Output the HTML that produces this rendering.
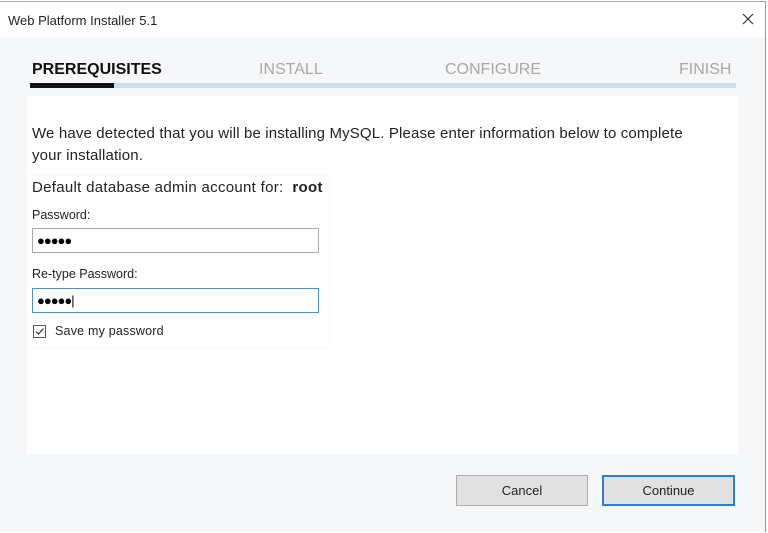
<!DOCTYPE html>
<html><head><style>
body{margin:0;width:768px;height:533px;background:#fff;font-family:"Liberation Sans",sans-serif;position:relative;overflow:hidden}
.win{position:absolute;left:0;top:1px;width:765px;height:530px;background:#f6f7f8;border-top:1px solid #aaa;border-right:1px solid #999}
.title{position:absolute;left:0;top:0;width:765px;height:35px;background:#fff}
.t{position:absolute;font-size:13px;color:#222}
.step{position:absolute;top:59px;font-size:16px;color:#a8a8a8}
.panel{position:absolute;left:27px;top:94px;width:711px;height:358px;background:#fff}
.inp{position:absolute;left:32px;width:287px;height:25px;border:1px solid #a9a9a9;background:#fff;font-size:13px;line-height:24px;padding-left:4px;box-sizing:border-box;letter-spacing:-1px}
.btn{position:absolute;top:473px;height:31px;background:#e1e1e1;border:1px solid #adadad;box-sizing:border-box;font-size:13px;text-align:center;line-height:29px;color:#222}
</style></head><body>
<div class="win">
<div class="title"></div>
<div class="t" style="left:8px;top:11px">Web Platform Installer 5.1</div>
<svg style="position:absolute;left:742px;top:11px" width="12" height="12"><path d="M1 1L11 11M11 1L1 11" stroke="#333" stroke-width="1.2"/></svg>
<div class="step" style="left:32px;color:#111;font-weight:bold">PREREQUISITES</div>
<div class="step" style="left:259px">INSTALL</div>
<div class="step" style="left:445px">CONFIGURE</div>
<div class="step" style="left:679px">FINISH</div>
<div style="position:absolute;left:30px;top:81px;width:706px;height:5px;background:#cfdeeb"></div>
<div style="position:absolute;left:30px;top:81px;width:84px;height:5px;background:#111"></div>
<div class="panel"></div>
<div class="t" style="left:32px;top:121px;font-size:15px;letter-spacing:0.15px;line-height:22px;width:665px">We have detected that you will be installing MySQL. Please enter information below to complete your installation.</div>
<div style="position:absolute;left:27px;top:174px;width:302px;height:172px;background:#fff;box-shadow:0 0 2px #f0f0f0"></div>
<div class="t" style="left:32px;top:177px;font-size:15px;letter-spacing:0.3px">Default database admin account for:&nbsp; <b>root</b></div>
<div class="t" style="left:32px;top:206px;font-size:12.5px">Password:</div>
<div class="inp" style="top:226px">●●●●●</div>
<div class="t" style="left:32px;top:265px;font-size:12.5px">Re-type Password:</div>
<div class="inp" style="top:286px;border-color:#4a90c8">●●●●●|</div>
<div style="position:absolute;left:33px;top:323px;width:13px;height:13px;border:1px solid #555;box-sizing:border-box"></div>
<svg style="position:absolute;left:34px;top:324px" width="11" height="11"><path d="M2 5.5L4.5 8L9.5 2.5" stroke="#333" fill="none" stroke-width="1.2"/></svg>
<div class="t" style="left:55px;top:322px;font-size:12.5px;letter-spacing:0.2px">Save my password</div>
<div class="btn" style="left:456px;width:132px">Cancel</div>
<div class="btn" style="left:602px;width:133px;border:2px solid #2f7fd0;line-height:27px">Continue</div>
</div>
</body></html>
